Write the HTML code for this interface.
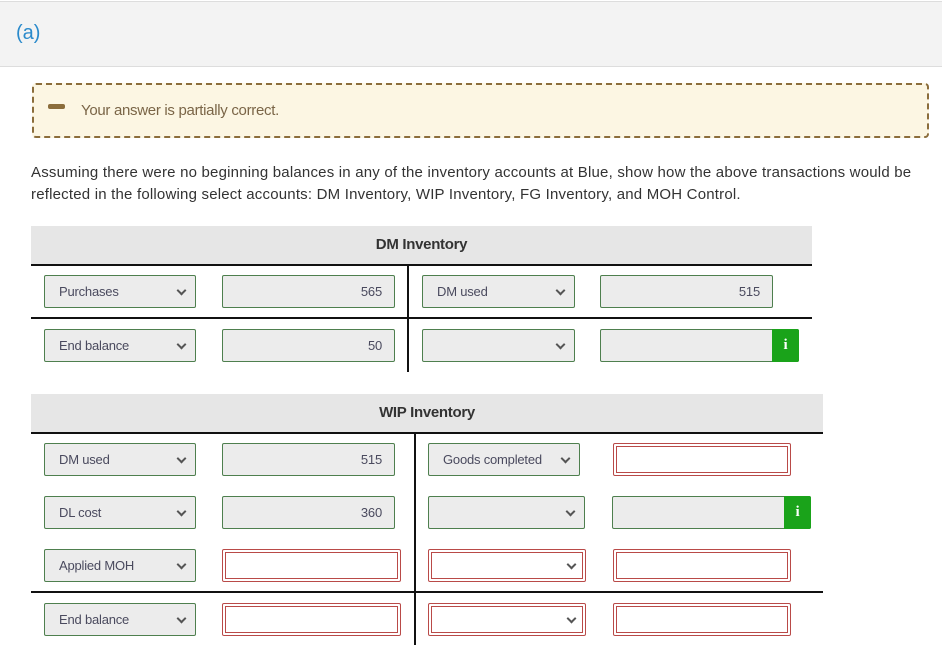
<!DOCTYPE html>
<html><head><meta charset="utf-8"><style>
*{box-sizing:border-box;margin:0;padding:0}
body{width:942px;height:658px;background:#fff;font-family:"Liberation Sans",sans-serif;position:relative;overflow:hidden;color:#333}
.a{position:absolute}
.hdr{left:0;top:1px;width:942px;height:66px;background:#f3f3f3;border-top:1px solid #ddd;border-bottom:1px solid #ddd}
.sel,.inp{position:absolute;height:33px;background:#ececec;border:1px solid #4e7f4e;border-radius:2px;font-size:13px;color:#4a4a5e;line-height:31px;letter-spacing:-0.2px}
.sel{padding-left:14px}
.sel:after{content:"";position:absolute;right:10px;top:11px;width:5px;height:5px;border-right:2px solid #555;border-bottom:2px solid #555;transform:rotate(45deg)}
.inp{text-align:right;padding-right:12px}
.red{position:absolute;height:33px;background:#fff;border:1px solid #b94a48;border-radius:2px}
.red:before{content:"";position:absolute;left:2px;top:2px;right:2px;bottom:2px;border:1px solid #b94a48}
.red.s:after{content:"";position:absolute;right:10px;top:11px;width:5px;height:5px;border-right:2px solid #555;border-bottom:2px solid #555;transform:rotate(45deg)}
.info{position:absolute;right:-1px;top:-1px;width:27px;height:33px;background:#1aa31a;color:#fff;font-weight:bold;font-family:"Liberation Serif",serif;font-size:15px;text-align:center;line-height:33px;border-radius:0 2px 2px 0}
.bar{position:absolute;background:#e6e6e6;border-bottom:2px solid #111;font-weight:bold;font-size:15px;text-align:center;color:#333;letter-spacing:-0.3px}
.hl{position:absolute;height:2px;background:#111}
.vl{position:absolute;width:2px;background:#111}
</style></head><body>
<div class="a hdr"></div>
<div class="a" style="left:16px;top:22px;font-size:20px;color:#2a8acb">(a)</div>
<div class="a" style="left:32px;top:83px;width:897px;height:55px;background:#fcf6e3;border:2px dashed #8b6d3b;border-radius:4px"></div>
<div class="a" style="left:48px;top:104px;width:17px;height:5px;background:#8b6d3b;border-radius:2px"></div>
<div class="a" style="left:81px;top:102px;font-size:15px;color:#7a6547;letter-spacing:-0.3px">Your answer is partially correct.</div>
<div class="a" style="left:31px;top:162px;width:905px;font-size:15px;line-height:22px;color:#333;letter-spacing:0.2px;white-space:nowrap">Assuming there were no beginning balances in any of the inventory accounts at Blue, show how the above transactions would be<br>reflected in the following select accounts: DM Inventory, WIP Inventory, FG Inventory, and MOH Control.</div>

<div class="bar" style="left:31px;top:226px;width:781px;height:40px;line-height:38px">DM Inventory</div>
<div class="hl" style="left:31px;top:317px;width:781px"></div>
<div class="vl" style="left:407px;top:265px;height:107px"></div>
<div class="sel" style="left:44px;top:275px;width:152px">Purchases</div>
<div class="inp" style="left:222px;top:275px;width:173px">565</div>
<div class="sel" style="left:422px;top:275px;width:153px">DM used</div>
<div class="inp" style="left:600px;top:275px;width:173px">515</div>
<div class="sel" style="left:44px;top:329px;width:152px">End balance</div>
<div class="inp" style="left:222px;top:329px;width:173px">50</div>
<div class="sel" style="left:422px;top:329px;width:153px"></div>
<div class="inp" style="left:600px;top:329px;width:199px"><span class="info">i</span></div>

<div class="bar" style="left:31px;top:394px;width:792px;height:40px;line-height:38px">WIP Inventory</div>
<div class="vl" style="left:414px;top:433px;height:212px"></div>
<div class="hl" style="left:31px;top:591px;width:792px"></div>
<div class="sel" style="left:44px;top:443px;width:152px">DM used</div>
<div class="inp" style="left:222px;top:443px;width:173px">515</div>
<div class="sel" style="left:428px;top:443px;width:152px">Goods completed</div>
<div class="red" style="left:613px;top:443px;width:178px"></div>
<div class="sel" style="left:44px;top:496px;width:152px">DL cost</div>
<div class="inp" style="left:222px;top:496px;width:173px">360</div>
<div class="sel" style="left:428px;top:496px;width:157px"></div>
<div class="inp" style="left:612px;top:496px;width:199px"><span class="info">i</span></div>
<div class="sel" style="left:44px;top:549px;width:152px">Applied MOH</div>
<div class="red" style="left:222px;top:549px;width:179px"></div>
<div class="red s" style="left:428px;top:549px;width:158px"></div>
<div class="red" style="left:613px;top:549px;width:178px"></div>
<div class="sel" style="left:44px;top:603px;width:152px">End balance</div>
<div class="red" style="left:222px;top:603px;width:179px"></div>
<div class="red s" style="left:428px;top:603px;width:158px"></div>
<div class="red" style="left:613px;top:603px;width:178px"></div>
</body></html>
